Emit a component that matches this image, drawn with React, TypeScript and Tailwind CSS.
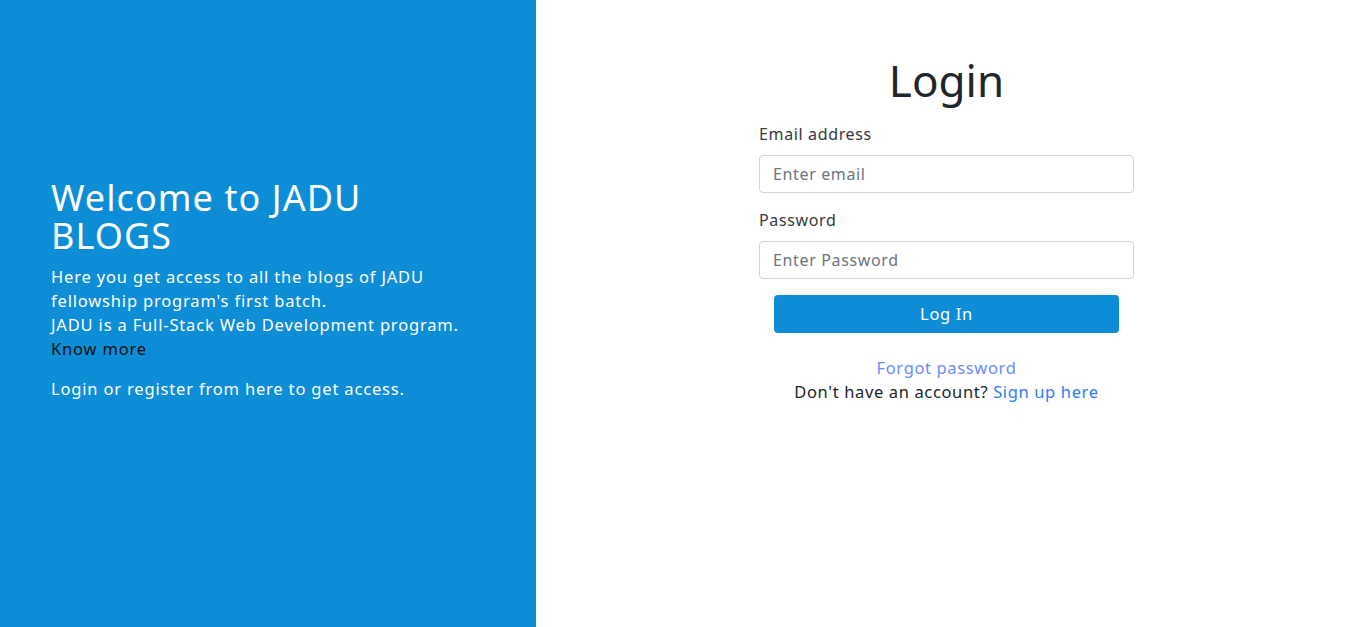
export default function App() {
  return (
    <div
      className="flex h-[627px] w-full"
      style={{ fontFamily: '"Noto Sans", "Open Sans", sans-serif' }}
    >
      {/* Left panel */}
      <div className="flex w-[536px] shrink-0 flex-col justify-center bg-[#0d8dd6] pl-[51px] pr-[30px] pb-[48px] text-white">
        <h1 className="text-[36px] leading-[38px] font-normal tracking-[0.03em]">
          Welcome to JADU
          <br />
          BLOGS
        </h1>
        <p className="mt-[10px] text-[16.5px] leading-[24px] tracking-[0.05em]">
          Here you get access to all the blogs of JADU
          <br />
          fellowship program's first batch.
          <br />
          JADU is a Full-Stack Web Development program.
          <br />
          <a href="#" className="text-[#111]">
            Know more
          </a>
        </p>
        <p className="mt-[16px] text-[16.5px] leading-[24px] tracking-[0.05em]">
          Login or register from here to get access.
        </p>
      </div>

      {/* Right panel */}
      <div className="flex flex-1 justify-center pt-[52px] pl-[6px]">
        <div className="flex w-[375px] flex-col tracking-[0.04em]">
          <h2 className="text-center text-[44px] leading-[56px] font-normal tracking-normal text-[#212529]">
            Login
          </h2>
          <label className="mt-[14px] text-[16px] leading-[24px] text-[#343a40]">
            Email address
          </label>
          <input
            type="email"
            placeholder="Enter email"
            className="mt-[9px] h-[38px] rounded-[4px] border border-[#ced4da] px-[13px] text-[16px] tracking-[0.04em] text-[#495057] placeholder:text-[#6c757d] outline-none"
          />
          <label className="mt-[15px] text-[16px] leading-[24px] text-[#343a40]">
            Password
          </label>
          <input
            type="password"
            placeholder="Enter Password"
            className="mt-[9px] h-[38px] rounded-[4px] border border-[#ced4da] px-[13px] text-[16px] tracking-[0.04em] text-[#495057] placeholder:text-[#6c757d] outline-none"
          />
          <button
            type="button"
            className="mx-auto mt-[16px] h-[38px] w-[345px] rounded-[4px] bg-[#0d8dd6] text-[16.5px] tracking-[0.04em] text-white"
          >
            Log In
          </button>
          <div className="mt-[23px] text-center text-[16.5px] leading-[24px]">
            <a href="#" className="text-[#6b8cff]">
              Forgot password
            </a>
            <div className="text-[#212529]">
              Don't have an account?{" "}
              <a href="#" className="text-[#2f7cf6]">
                Sign up here
              </a>
            </div>
          </div>
        </div>
      </div>
    </div>
  );
}
